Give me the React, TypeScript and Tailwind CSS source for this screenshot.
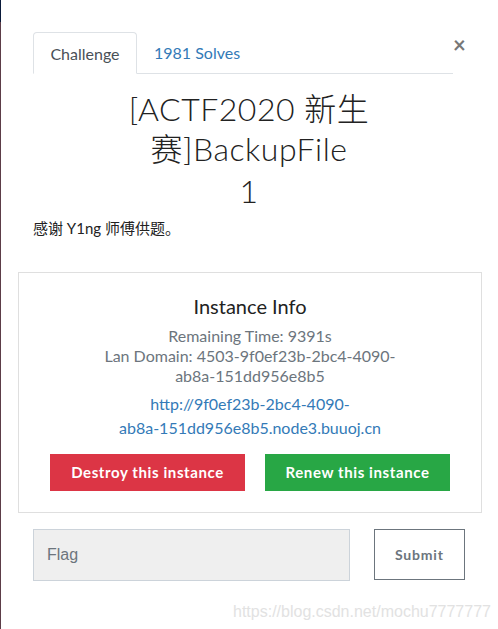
import React from "react";

export default function App() {
  return (
    <div className="relative w-[498px] h-[629px] bg-white overflow-hidden" style={{ fontFamily: "Lato, 'Noto Sans CJK SC', sans-serif" }}>
      <div className="absolute left-0 top-0 w-[1px] h-[629px] bg-[#5c3d48]" />
      <div className="absolute left-0 top-0 w-[1px] h-[22px] bg-[#0a1a3a]" />

      {/* close */}
      <div className="absolute left-[453px] top-[34px] text-[22px] leading-none text-[#777] font-bold">×</div>

      {/* tabs */}
      <div className="pt-[32px] px-[33px]">
        <div className="flex w-[420px] border-b border-[#dee2e6] h-[42px]">
          <div className="w-[104px] h-[42px] border border-[#dee2e6] border-b-white rounded-t-[4px] bg-white flex items-center justify-center text-[16px] text-[#495057] -mb-[1px] pt-[1px]">
            Challenge
          </div>
          <div className="px-[17px] flex items-center text-[16px] text-[#337ab7] pt-[1px]">1981 Solves</div>
        </div>
      </div>

      {/* title */}
      <div className="mt-[15px] text-center text-[32px] leading-[40px] text-[#222] font-light tracking-[0.5px]">
        <div>[ACTF2020 新生</div>
        <div>赛]BackupFile</div>
        <div className="mt-[2px]">1</div>
      </div>

      <div className="mt-[7px] px-[33px] text-[15px] leading-[20px] text-[#222]">感谢 Y1ng 师傅供题。</div>

      {/* instance box */}
      <div className="mt-[34px] mx-[18px] w-[464px] h-[241px] border border-[#dfdfdf] flex flex-col items-center">
        <div className="mt-[21px] text-[20px] leading-[24px] text-[#222]">Instance Info</div>
        <div className="mt-[7px] text-[16px] leading-[21px] text-[#6c757d] text-center">Remaining Time: 9391s</div>
        <div className="text-[16px] leading-[20px] text-[#6c757d] text-center w-[320px]">
          Lan Domain: 4503-9f0ef23b-2bc4-4090-
          <br />
          ab8a-151dd956e8b5
        </div>
        <div className="mt-[6px] text-[16px] leading-[24px] text-[#337ab7] text-center">
          http://9f0ef23b-2bc4-4090-
          <br />
          ab8a-151dd956e8b5.node3.buuoj.cn
        </div>
        <div className="mt-[14px] flex gap-[20px]">
          <div className="w-[195px] h-[37px] bg-[#dc3545] text-white font-bold text-[15px] tracking-[0.6px] flex items-center justify-center">
            Destroy this instance
          </div>
          <div className="w-[185px] h-[37px] bg-[#28a745] text-white font-bold text-[15px] tracking-[0.6px] flex items-center justify-center">
            Renew this instance
          </div>
        </div>
      </div>

      {/* flag row */}
      <div className="mt-[16px] px-[33px] flex items-start">
        <div className="w-[319px] h-[52px] bg-[#efefef] border border-[#ccd3da] flex items-center px-[13px] text-[16px] text-[#6c757d]" style={{ fontFamily: "'Liberation Sans', Arial, sans-serif" }}>
          Flag
        </div>
        <div className="ml-[24px] w-[92px] h-[51px] border border-[#6c757d] flex items-center justify-center text-[14px] font-bold text-[#6c757d] tracking-[0.8px]">
          Submit
        </div>
      </div>

      <div className="absolute left-[233px] top-[600px] text-[16px] text-[#e2e2e2]" style={{ fontFamily: "'Liberation Sans', Arial, sans-serif" }}>
        https://blog.csdn.net/mochu7777777
      </div>
    </div>
  );
}
